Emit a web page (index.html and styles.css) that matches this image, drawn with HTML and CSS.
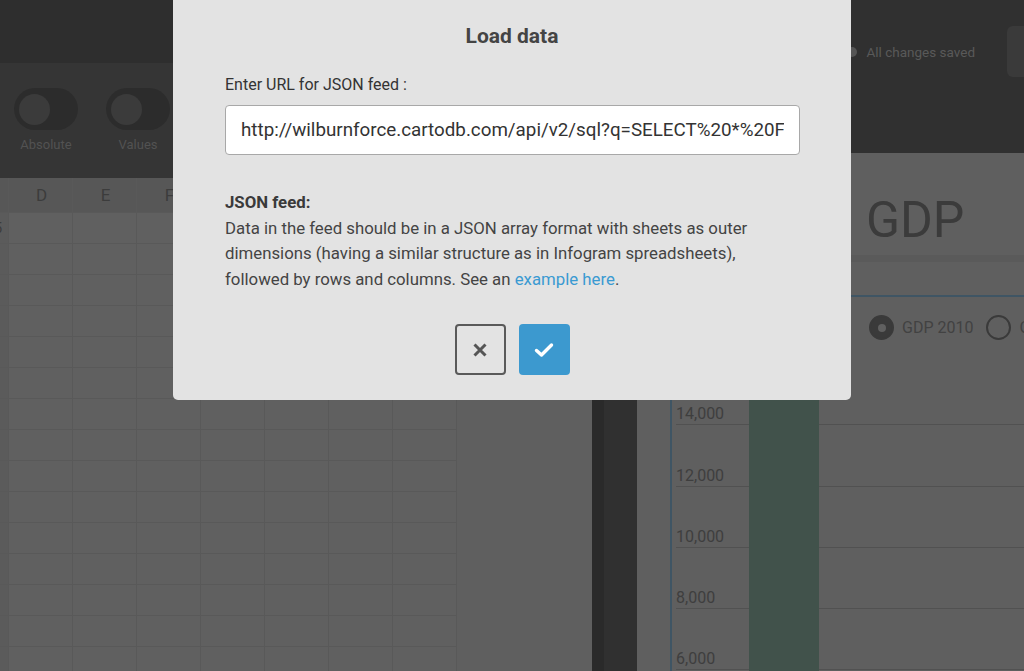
FILE: index.html
```html
<!DOCTYPE html>
<html lang="en">
<head>
    <meta charset="UTF-8">
    <meta name="viewport" content="width=device-width, initial-scale=1.0">
    <title>Load data</title>
    <link rel="stylesheet" href="styles.css">
</head>
<body>
    <div class="app">
        <div class="editor">
            <div class="topbar"></div>

            <div class="toolbar">
                <div class="toggle-item">
                    <div class="toggle"><span class="knob"></span></div>
                    <span class="toggle-label">Absolute</span>
                </div>
                <div class="toggle-item">
                    <div class="toggle"><span class="knob"></span></div>
                    <span class="toggle-label">Values</span>
                </div>
            </div>

            <div class="sheet">
                <div class="sheet-grid" id="sheet-grid">
                    <div class="cell head"></div>
                    <div class="cell head">D</div>
                    <div class="cell head">E</div>
                    <div class="cell head">F</div>
                    <div class="cell head">G</div>
                    <div class="cell head">H</div>
                    <div class="cell head">I</div>
                    <div class="cell head">J</div>
                </div>
            </div>
        </div>

        <div class="preview">
            <div class="preview-head">
                <div class="status">
                    <span class="status-dot"></span>
                    <span>All changes saved</span>
                </div>
                <button class="head-button"></button>
            </div>

            <div class="preview-body">
                <div class="rail"></div>
                <div class="card">
                    <div class="card-title">GDP</div>
                    <div class="card-band"></div>

                    <div class="chart">
                        <div class="legend">
                            <span class="radio checked"></span>
                            <span class="legend-text">GDP 2010</span>
                            <span class="radio"></span>
                            <span class="legend-text">GDP 2011</span>
                        </div>
                        <div class="plot">
                            <div class="plot-row"><span>14,000</span></div>
                            <div class="plot-row"><span>12,000</span></div>
                            <div class="plot-row"><span>10,000</span></div>
                            <div class="plot-row"><span>8,000</span></div>
                            <div class="plot-row"><span>6,000</span></div>
                            <div class="plot-row"><span>4,000</span></div>
                            <div class="bar"></div>
                        </div>
                    </div>
                </div>
            </div>
        </div>
    </div>

    <div class="modal">
        <h2 class="modal-title">Load data</h2>

        <label class="field-label" for="feed-url">Enter URL for JSON feed :</label>
        <input type="text" id="feed-url" class="field-input" value="http://wilburnforce.cartodb.com/api/v2/sql?q=SELECT%20*%20FROM%20gdp">

        <div class="help">
            <strong>JSON feed:</strong><br>
            Data in the feed should be in a JSON array format with sheets as outer
            dimensions (having a similar structure as in Infogram spreadsheets),
            followed by rows and columns. See an <a href="#">example here</a>.
        </div>

        <div class="modal-buttons">
            <button class="btn-cancel" title="Cancel">
                <svg width="16" height="16" viewBox="0 0 16 16">
                    <path d="M2.5 2.5 L13.5 13.5 M13.5 2.5 L2.5 13.5" stroke="#555" stroke-width="3" fill="none"/>
                </svg>
            </button>
            <button class="btn-ok" title="Load">
                <svg width="20" height="16" viewBox="0 0 20 16">
                    <path d="M2.5 8.5 L7.5 13 L17.5 3" stroke="#fff" stroke-width="3.4" fill="none" stroke-linecap="round" stroke-linejoin="round"/>
                </svg>
            </button>
        </div>
    </div>

    <script>
        const grid = document.getElementById('sheet-grid');
        for (let r = 0; r < 15; r++) {
            for (let c = 0; c < 8; c++) {
                const cell = document.createElement('div');
                cell.className = c === 0 ? 'cell num' : 'cell';
                if (c === 0 && r === 0) cell.innerText = '5';
                grid.appendChild(cell);
            }
        }
    </script>
</body>
</html>
```

FILE: styles.css
```css
body {
    font-family: Roboto, "Liberation Sans", Arial, sans-serif;
    background-color: #5f5f5f;
    margin: 0;
    padding: 0;
    overflow: hidden;
}

.app {
    display: flex;
    height: 671px;
}

/* left side: toolbar + spreadsheet */

.editor {
    width: 592px;
    flex: none;
    display: flex;
    flex-direction: column;
    background-color: #5f5f5f;
}

.topbar {
    height: 63px;
    background-color: #2e2e2e;
}

.toolbar {
    height: 115px;
    background-color: #353535;
    display: flex;
    gap: 28px;
    padding: 25px 0 0 14px;
    box-sizing: border-box;
}

.toggle-item {
    width: 64px;
    display: flex;
    flex-direction: column;
    align-items: center;
}

.toggle {
    width: 64px;
    height: 42px;
    border-radius: 21px;
    background-color: #2c2c2c;
    display: flex;
    align-items: center;
    padding-left: 5px;
    box-sizing: border-box;
}

.knob {
    width: 31px;
    height: 31px;
    border-radius: 50%;
    background-color: #3b3b3b;
}

.toggle-label {
    margin-top: 7px;
    font-size: 13px;
    line-height: 16px;
    color: #525252;
}

.sheet {
    flex: 1;
    overflow: hidden;
    background-color: #5f5f5f;
}

.sheet-grid {
    display: grid;
    grid-template-columns: 40px repeat(7, 64px);
    grid-template-rows: 35px;
    grid-auto-rows: 31px;
    margin-left: -31px;
}

.cell {
    border-right: 1px solid #595959;
    border-bottom: 1px solid #595959;
    box-sizing: border-box;
    background-color: #606060;
}

.cell.head {
    background-color: #575757;
    color: #3c3c3c;
    font-size: 17px;
    display: flex;
    align-items: center;
    justify-content: center;
    padding-left: 2px;
}

.cell.num {
    background-color: #5b5b5b;
    color: #3c3c3c;
    font-size: 14px;
    text-align: right;
    padding-right: 6px;
    line-height: 30px;
}

/* right side: preview */

.preview {
    flex: 1;
    display: flex;
    flex-direction: column;
    overflow: hidden;
}

.preview-head {
    height: 153px;
    flex: none;
    background-color: #303030;
    display: flex;
    justify-content: flex-end;
    align-items: flex-start;
    padding-top: 26px;
    box-sizing: border-box;
}

.status {
    height: 51px;
    display: flex;
    align-items: center;
    gap: 9px;
    font-size: 13.5px;
    color: #595959;
    margin-right: 32px;
}

.status-dot {
    width: 10px;
    height: 10px;
    border-radius: 50%;
    background-color: #555;
}

.head-button {
    width: 60px;
    height: 51px;
    margin-right: -43px;
    border: none;
    border-radius: 6px;
    background-color: #3a3a3a;
    flex: none;
}

.preview-body {
    flex: 1;
    display: flex;
}

.rail {
    width: 45px;
    flex: none;
    background-color: #303030;
    border-left: 12px solid #2a2a2a;
    box-sizing: border-box;
}

.card {
    flex: 1;
    background-color: #5f5f5f;
    overflow: hidden;
}

.card-title {
    height: 102px;
    padding: 37px 0 0 229px;
    box-sizing: border-box;
    font-size: 50px;
    line-height: 60px;
    color: #3b3b3b;
}

.card-band {
    height: 7px;
    background-color: #5a5a5a;
    margin-bottom: 33px;
}

.chart {
    margin-left: 33px;
    border-top: 2px solid #3f5564;
    border-left: 2px solid #3f5564;
}

.legend {
    height: 67px;
    display: flex;
    align-items: center;
    padding: 0 0 6px 197px;
    box-sizing: border-box;
    white-space: nowrap;
    font-size: 16px;
    color: #424242;
}

.radio {
    width: 25px;
    height: 25px;
    border-radius: 50%;
    border: 2px solid #3a3a3a;
    box-sizing: border-box;
    flex: none;
    display: flex;
    align-items: center;
    justify-content: center;
}

.radio.checked {
    background-color: #3a3a3a;
}

.radio.checked::after {
    content: "";
    width: 8px;
    height: 8px;
    border-radius: 50%;
    background-color: #606060;
}

.legend-text {
    margin: 0 13px 0 8px;
}

.plot {
    position: relative;
    padding-left: 4px;
}

.plot-row {
    height: 61.3px;
    border-bottom: 1px solid #515151;
    box-sizing: border-box;
    display: flex;
    align-items: flex-end;
    font-size: 16px;
    color: #3e3e3e;
    line-height: 20px;
}

.bar {
    position: absolute;
    left: 77px;
    top: -40px;
    bottom: 0;
    width: 70px;
    background-color: #41524b;
}

/* modal */

.modal {
    position: absolute;
    top: 0;
    left: 50%;
    margin-left: -339px;
    width: 678px;
    height: 400px;
    box-sizing: border-box;
    padding: 24px 52px 0 52px;
    background-color: #e3e3e3;
    border-radius: 0 0 5px 5px;
    color: #444;
}

.modal-title {
    margin: 0;
    text-align: center;
    font-size: 21px;
    line-height: 24px;
    font-weight: bold;
    color: #444;
}

.field-label {
    display: block;
    margin-top: 27px;
    font-size: 16px;
    line-height: 20px;
    color: #333;
}

.field-input {
    display: block;
    margin-top: 10px;
    width: 575px;
    height: 50px;
    box-sizing: border-box;
    padding: 0 15px;
    border: 1px solid #a8a8a8;
    border-radius: 4px;
    background-color: #fff;
    font-family: Roboto, "Liberation Sans", Arial, sans-serif;
    font-size: 18.8px;
    color: #333;
}

.help {
    margin-top: 35px;
    font-size: 16.8px;
    line-height: 25.5px;
    color: #444;
}

.help strong {
    color: #3a3a3a;
}

.help a {
    color: #3a9ad2;
    text-decoration: none;
}

.modal-buttons {
    display: flex;
    justify-content: center;
    gap: 13px;
    margin-top: 32px;
}

.modal-buttons button {
    width: 51px;
    height: 51px;
    border-radius: 4px;
    display: flex;
    align-items: center;
    justify-content: center;
    padding: 0;
    cursor: pointer;
}

.btn-cancel {
    background-color: transparent;
    border: 2px solid #5a5a5a;
}

.btn-ok {
    background-color: #3c99cf;
    border: none;
}
```
